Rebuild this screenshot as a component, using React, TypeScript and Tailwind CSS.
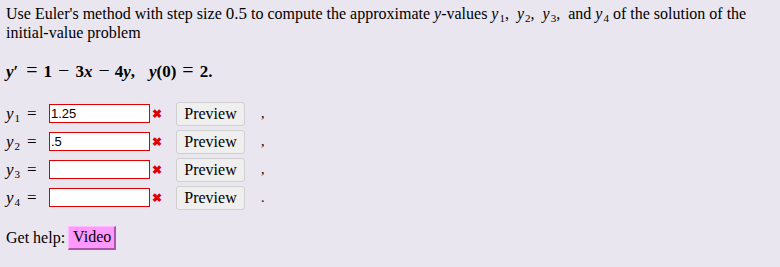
import React from "react";

const serif = { fontFamily: '"Liberation Serif", "Times New Roman", serif' };

function V({ children }: { children: React.ReactNode }) {
  return <i className="italic">{children}</i>;
}

function Yn({ n }: { n: number }) {
  return (
    <span className="whitespace-nowrap">
      <V>y</V>
      <span className="text-[11px] relative top-[3px] ml-[1px]">{n}</span>
    </span>
  );
}

function Op({ c, cls }: { c: string; cls: string }) {
  return <span className={`inline-block text-[20px] leading-none font-normal ${cls}`}>{c}</span>;
}

function Row({ n, value, punct }: { n: number; value: string; punct: string }) {
  return (
    <div className="flex items-center h-[28px]">
      <div className="w-[43px] flex items-center text-[17px]">
        <Yn n={n} />
        <span className="ml-[7px]">=</span>
      </div>
      <input
        readOnly
        value={value}
        className="w-[101px] h-[19px] border border-[#e00000] bg-white px-[1px] text-[13px] text-black outline-none"
        style={{ fontFamily: '"Liberation Sans", Arial, sans-serif' }}
      />
      <span className="ml-[2px] w-[8px] text-[#e00000] text-[12px] leading-none font-bold">✖</span>
      <button className="ml-[16px] w-[69px] h-[24px] rounded-[3px] border border-[#d0d0d0] bg-[#efefef] text-[16px] text-black leading-none">
        Preview
      </button>
      <span className="ml-[16px] text-[14px]">{punct}</span>
    </div>
  );
}

export default function App() {
  return (
    <div className="w-[780px] h-[267px] bg-[#e9e6f0] text-black px-[6px] pt-[5px]" style={serif}>
      <p className="text-[16px] leading-[18px]">
        Use Euler's method with step size <span className="text-[17px]">0.5</span> to compute the approximate <V>y</V>-values <Yn n={1} />,&nbsp; <Yn n={2} />,&nbsp; <Yn n={3} />,&nbsp; and <Yn n={4} /> of the solution of the
        <br />
        initial-value problem
      </p>
      <p className="mt-[17px] text-[17px] font-semibold flex items-baseline whitespace-pre">
        <V>y</V>
        <span className="ml-[0px]">′</span>
        <Op c="=" cls="ml-[8px]" />
        <span className="ml-[6px]">1</span>
        <Op c="−" cls="ml-[6px]" />
        <span className="ml-[6px]">3</span>
        <V>x</V>
        <Op c="−" cls="ml-[6px]" />
        <span className="ml-[5px]">4</span>
        <V>y</V>
        <span>,</span>
        <span className="ml-[14px]"><V>y</V></span>
        <span>(0)</span>
        <Op c="=" cls="ml-[6px]" />
        <span className="ml-[6px]">2.</span>
      </p>
      <div className="mt-[15px] flex flex-col">
        <Row n={1} value="1.25" punct="," />
        <Row n={2} value=".5" punct="," />
        <Row n={3} value="" punct="," />
        <Row n={4} value="" punct="." />
      </div>
      <div className="mt-[14px] flex items-center text-[16px]">
        <span>Get help:</span>
        <button className="ml-[3px] h-[24px] pl-[4px] pr-[3px] bg-[#ff99ff] border border-[#ffbbff] border-r-[#aa55aa] border-b-[#aa55aa] border-r-2 border-b-2 text-[16px] leading-none">
          Video
        </button>
      </div>
    </div>
  );
}
